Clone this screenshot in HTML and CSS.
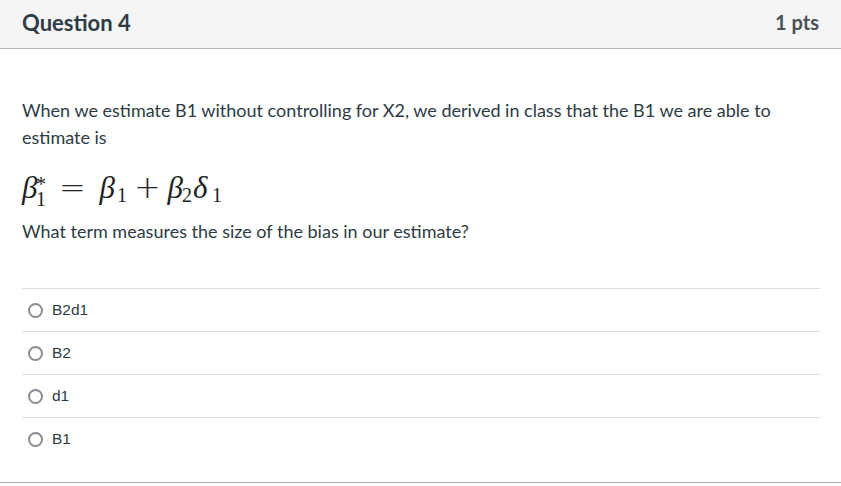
FILE: index.html
```html
<!DOCTYPE html>
<html>
<head>
<meta charset="utf-8">
<link rel="stylesheet" href="styles.css">
</head>
<body>
<div class="question">
  <div class="header">
    <span class="title">Question 4</span>
    <span class="pts">1 pts</span>
  </div>
  <div class="content">
    <p class="text first">When we estimate B1 without controlling for X2, we derived in class that the B1 we are able to estimate is</p>
    <div class="math"><span class="mi b0">β</span><span class="scripts"><span class="sup">*</span><span class="sub2">1</span></span><span class="mo eq">=</span><span class="mi b1">β</span><span class="sub s1">1</span><span class="mo plus">+</span><span class="mi b2">β</span><span class="sub s2">2</span><span class="mi delta">δ</span><span class="sub s3">1</span></div>
    <p class="text">What term measures the size of the bias in our estimate?</p>
  </div>
  <div class="answers">
    <label class="answer"><span class="radio"></span><span class="label">B2d1</span></label>
    <label class="answer"><span class="radio"></span><span class="label">B2</span></label>
    <label class="answer"><span class="radio"></span><span class="label">d1</span></label>
    <label class="answer"><span class="radio"></span><span class="label">B1</span></label>
  </div>
</div>
</body>
</html>
```
FILE: styles.css
```css
html, body {
  margin: 0;
  padding: 0;
  background: #ffffff;
}
body {
  font-family: Lato, "Open Sans", sans-serif;
  color: #2d3b45;
}
.question {
  border-bottom: 1px solid #a9a9a9;
  height: 483px;
  box-sizing: border-box;
  display: flex;
  flex-direction: column;
}
.header {
  height: 49px;
  box-sizing: border-box;
  padding: 0 22px 4px 22px;
  background: #f5f5f5;
  border-bottom: 1px solid #b8b8b8;
  display: flex;
  align-items: center;
  justify-content: space-between;
  flex: none;
}
.title {
  font-weight: 700;
  font-size: 22px;
  color: #2d3b45;
}
.pts {
  font-weight: 700;
  font-size: 20px;
  color: #4a4f54;
}
.content {
  padding: 0 22px;
}
.text {
  font-size: 18px;
  line-height: 26.6px;
  margin: 0;
}
.text.first {
  margin-top: 48px;
}
.math {
  font-family: "Liberation Serif", "Times New Roman", serif;
  font-size: 31px;
  height: 68px;
  line-height: 76px;
  white-space: nowrap;
  color: #222;
}
.math span {
  line-height: 1;
  display: inline-block;
}
.mi {
  font-style: italic;
}
.sub, .sup, .sub2 {
  font-size: 20px;
}
.math .scripts {
  display: inline-flex;
  flex-direction: column;
  vertical-align: 7px;
  width: 23px;
}
.math .scripts .sup,
.math .scripts .sub2 {
  line-height: 15px;
}
.sub {
  vertical-align: -4px;
}
.mo {
  font-family: "DejaVu Sans", sans-serif;
  font-size: 32px;
  font-weight: 300;
}
.b0 { width: 14px; }
.eq { width: 40.5px; }
.b1 { width: 17.5px; }
.s1 { width: 17px; }
.plus { width: 33.5px; }
.b2 { width: 14.5px; }
.s2 { width: 11px; }
.delta { width: 19px; }
.s3 { width: 10px; }
.answers {
  margin: 43.5px 21px 0 22px;
}
.answer {
  display: flex;
  align-items: center;
  height: 42px;
  border-top: 1px solid #dcdcdc;
  padding-left: 6px;
}
.radio {
  width: 11px;
  height: 11px;
  border: 2px solid #8b8a93;
  border-radius: 50%;
  margin-right: 9px;
}
.label {
  font-family: "Liberation Sans", Arial, sans-serif;
  font-size: 15.5px;
  color: #2d3b45;
}
```
